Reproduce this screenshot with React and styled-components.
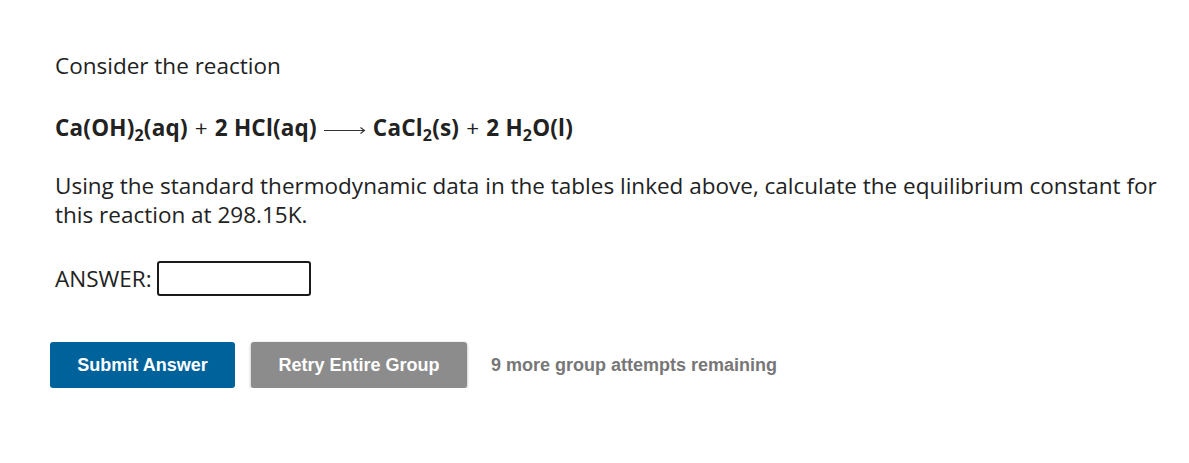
import React from "react"
import styled, { createGlobalStyle } from "styled-components"

const GlobalStyle = createGlobalStyle`
  body {
    margin: 0;
    background: #fff;
    font-family: "Open Sans", "Liberation Sans", sans-serif;
    color: #222;
  }
`

const Page = styled.div`
  padding: 51px 0 0 55px;
`

const Para = styled.p`
  margin: 0 0 ${(p) => p.gap || 0}px;
  font-size: 22.5px;
  line-height: 29px;
  max-width: 1112px;
`

const Equation = styled.div`
  display: flex;
  align-items: center;
  font-size: 22.5px;
  font-weight: 700;
  line-height: 29px;
  letter-spacing: 0.2px;
  margin-bottom: 29px;

  sub {
    font-size: 16px;
    vertical-align: -5px;
    line-height: 0;
  }
`

const Plus = styled.span`
  font-weight: 400;
  margin: 0 7px;
`

const Arrow = styled.svg`
  width: 42px;
  height: 10px;
  margin: 4px 7px 0;
`

const AnswerRow = styled.div`
  display: flex;
  align-items: center;
  gap: 5px;
  font-size: 22.5px;
  margin-bottom: 46px;
`

const AnswerInput = styled.input`
  width: 150px;
  height: 31px;
  box-sizing: content-box;
  padding: 0;
  border: 2px solid #1a1a1a;
  border-radius: 3px;
`

const Actions = styled.div`
  display: flex;
  align-items: center;
  gap: 16px;
  margin-left: -5px;
  font-family: "Liberation Sans", Arial, sans-serif;
`

const Button = styled.button`
  height: 46px;
  width: ${(p) => p.w}px;
  padding: 0;
  border: none;
  border-radius: 3px;
  font-family: inherit;
  font-size: 18px;
  font-weight: 700;
  color: #fff;
  background: ${(p) => (p.secondary ? "#8c8c8c" : "#00629b")};
  box-shadow: ${(p) => (p.secondary ? "0 1px 3px rgba(0,0,0,0.35)" : "none")};
`

const Remaining = styled.span`
  margin-left: 8px;
  font-size: 18px;
  font-weight: 700;
  color: #777;
`

export default function App() {
  return (
    <>
      <GlobalStyle />
      <Page>
        <Para gap={33}>Consider the reaction</Para>
        <Equation>
          <span>
            Ca(OH)<sub>2</sub>(aq)
          </span>
          <Plus>+</Plus>
          <span>2 HCl(aq)</span>
          <Arrow viewBox="0 0 42 10">
            <path d="M0 5.5H40" stroke="#333" strokeWidth="1.2" />
            <path d="M36.5 2.5L40.5 5.5L36.5 8.5" stroke="#333" strokeWidth="1.1" fill="none" />
          </Arrow>
          <span>
            CaCl<sub>2</sub>(s)
          </span>
          <Plus>+</Plus>
          <span>
            2 H<sub>2</sub>O(l)
          </span>
        </Equation>
        <Para gap={32}>
          Using the standard thermodynamic data in the tables linked above, calculate the
          equilibrium constant for this reaction at 298.15K.
        </Para>
        <AnswerRow>
          ANSWER:
          <AnswerInput type="text" />
        </AnswerRow>
        <Actions>
          <Button w={185}>Submit Answer</Button>
          <Button secondary w={216}>Retry Entire Group</Button>
          <Remaining>9 more group attempts remaining</Remaining>
        </Actions>
      </Page>
    </>
  )
}
